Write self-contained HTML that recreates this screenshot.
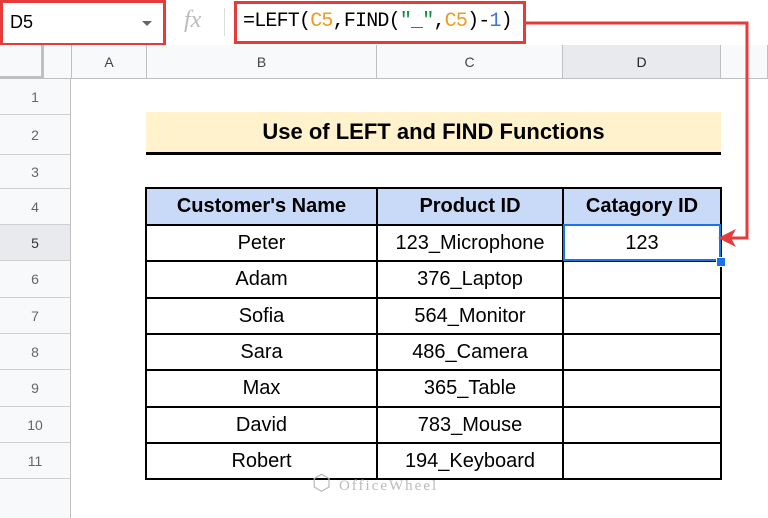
<!DOCTYPE html>
<html><head><style>
body{margin:0;width:768px;height:518px;overflow:hidden;background:#fff;font-family:"Liberation Sans",Arial,sans-serif;position:relative}
.a{position:absolute}
.rh{position:absolute;left:0;width:71px;background:#f8f9fa;border-right:1px solid #c0c0c0;border-bottom:1px solid #d0d0d0;color:#666;font-size:14px;display:flex;align-items:center;justify-content:center;box-sizing:border-box}
.ch{position:absolute;top:45px;height:34px;border-right:1px solid #c0c0c0;border-bottom:1px solid #c0c0c0;background:#f8f9fa;color:#444;font-size:14px;display:flex;align-items:center;justify-content:center;box-sizing:border-box}
.c{position:absolute;display:flex;align-items:center;justify-content:center;font-size:20px;color:#000;box-sizing:border-box;border-right:2px solid #000;border-bottom:2px solid #000}
.h{background:#c9daf8;font-weight:bold}
</style></head><body>
<div class="a" style="left:0;top:0;width:768px;height:45px;background:#fff;border-bottom:1px solid #c0c0c0"></div>
<div class="a" style="left:0;top:0;width:160px;height:40px;border:3px solid #e63b3b;"></div>
<div class="a" style="left:10px;top:12px;font-size:18px">D5</div>
<div class="a" style="left:142px;top:21px;width:0;height:0;border-left:5px solid transparent;border-right:5px solid transparent;border-top:5px solid #666"></div>
<div class="a" style="left:184px;top:7px;font-size:24px;color:#bbb;font-style:italic;font-family:'Liberation Serif',serif">fx</div>
<div class="a" style="left:224px;top:8px;width:1px;height:28px;background:#ddd"></div>
<div class="a" style="left:234px;top:1px;width:286px;height:37px;border:3px solid #e63b3b"></div>
<div class="a" style="left:243px;top:10px;font-size:20px;font-family:'Liberation Mono',monospace;letter-spacing:-0.8px">=LEFT(<span style="color:#f09a20">C5</span>,FIND(<span style="color:#0a8f3c">"_"</span>,<span style="color:#f09a20">C5</span>)-<span style="color:#3c78d8">1</span>)</div>
<div class="ch" style="left:0;width:72px;background:#f8f9fa"></div>
<div class="ch" style="left:72px;width:75px">A</div>
<div class="ch" style="left:147px;width:230px">B</div>
<div class="ch" style="left:377px;width:186px">C</div>
<div class="ch" style="left:563px;width:158px;background:#e8eaed;color:#222">D</div>
<div class="ch" style="left:721px;width:47px"></div>
<div class="a" style="left:0;top:45px;width:44px;height:34px;border-right:3px solid #c0c0c0;border-bottom:3px solid #c0c0c0;box-sizing:border-box"></div>
<div class="rh" style="top:79px;height:36px">1</div>
<div class="rh" style="top:115px;height:40px">2</div>
<div class="rh" style="top:155px;height:34px">3</div>
<div class="rh" style="top:189px;height:36px">4</div>
<div class="rh" style="top:225px;height:36px;background:#e8eaed;color:#333">5</div>
<div class="rh" style="top:261px;height:37px">6</div>
<div class="rh" style="top:298px;height:36px">7</div>
<div class="rh" style="top:334px;height:36px">8</div>
<div class="rh" style="top:370px;height:37px">9</div>
<div class="rh" style="top:407px;height:36px">10</div>
<div class="rh" style="top:443px;height:36px">11</div>
<div class="rh" style="top:479px;height:39px;border-bottom:none"></div>
<div class="a" style="left:146px;top:112px;width:575px;height:40px;background:#fff2cc;border-bottom:3px solid #000;display:flex;align-items:center;justify-content:center;font-weight:bold;font-size:22px">Use of LEFT and FIND Functions</div>
<div class="a" style="left:145px;top:187px;width:2px;height:293px;background:#000"></div>
<div class="a" style="left:145px;top:187px;width:577px;height:2px;background:#000"></div>
<div class="c h" style="left:147px;top:189px;width:231px;height:37px">Customer's Name</div>
<div class="c h" style="left:378px;top:189px;width:186px;height:37px">Product ID</div>
<div class="c h" style="left:564px;top:189px;width:158px;height:37px">Catagory ID</div>
<div class="c" style="left:147px;top:226px;width:231px;height:36px">Peter</div>
<div class="c" style="left:378px;top:226px;width:186px;height:36px">123_Microphone</div>
<div class="c" style="left:564px;top:226px;width:158px;height:36px">123</div>
<div class="c" style="left:147px;top:262px;width:231px;height:37px">Adam</div>
<div class="c" style="left:378px;top:262px;width:186px;height:37px">376_Laptop</div>
<div class="c" style="left:564px;top:262px;width:158px;height:37px"></div>
<div class="c" style="left:147px;top:299px;width:231px;height:36px">Sofia</div>
<div class="c" style="left:378px;top:299px;width:186px;height:36px">564_Monitor</div>
<div class="c" style="left:564px;top:299px;width:158px;height:36px"></div>
<div class="c" style="left:147px;top:335px;width:231px;height:36px">Sara</div>
<div class="c" style="left:378px;top:335px;width:186px;height:36px">486_Camera</div>
<div class="c" style="left:564px;top:335px;width:158px;height:36px"></div>
<div class="c" style="left:147px;top:371px;width:231px;height:37px">Max</div>
<div class="c" style="left:378px;top:371px;width:186px;height:37px">365_Table</div>
<div class="c" style="left:564px;top:371px;width:158px;height:37px"></div>
<div class="c" style="left:147px;top:408px;width:231px;height:36px">David</div>
<div class="c" style="left:378px;top:408px;width:186px;height:36px">783_Mouse</div>
<div class="c" style="left:564px;top:408px;width:158px;height:36px"></div>
<div class="c" style="left:147px;top:444px;width:231px;height:36px">Robert</div>
<div class="c" style="left:378px;top:444px;width:186px;height:36px">194_Keyboard</div>
<div class="c" style="left:564px;top:444px;width:158px;height:36px"></div>
<div class="a" style="left:563px;top:224px;width:158px;height:37px;border:2px solid #1a73e8;box-sizing:border-box"></div>
<div class="a" style="left:716px;top:257px;width:8px;height:8px;background:#1a73e8;border:1px solid #fff"></div>
<div class="a" style="left:312px;top:470px;font-size:15px;color:#bbb;letter-spacing:2px;font-family:'Liberation Serif',serif"><span style="font-size:22px">⬡</span> OfficeWheel</div>
<svg class="a" style="left:0;top:0" width="768" height="518">
<polyline points="523,23 747,23 747,238 730,238" fill="none" stroke="#e63b3b" stroke-width="3"/>
<polygon points="718,238 736,229 731,238 736,247" fill="#e63b3b"/>
</svg>
</body></html>
